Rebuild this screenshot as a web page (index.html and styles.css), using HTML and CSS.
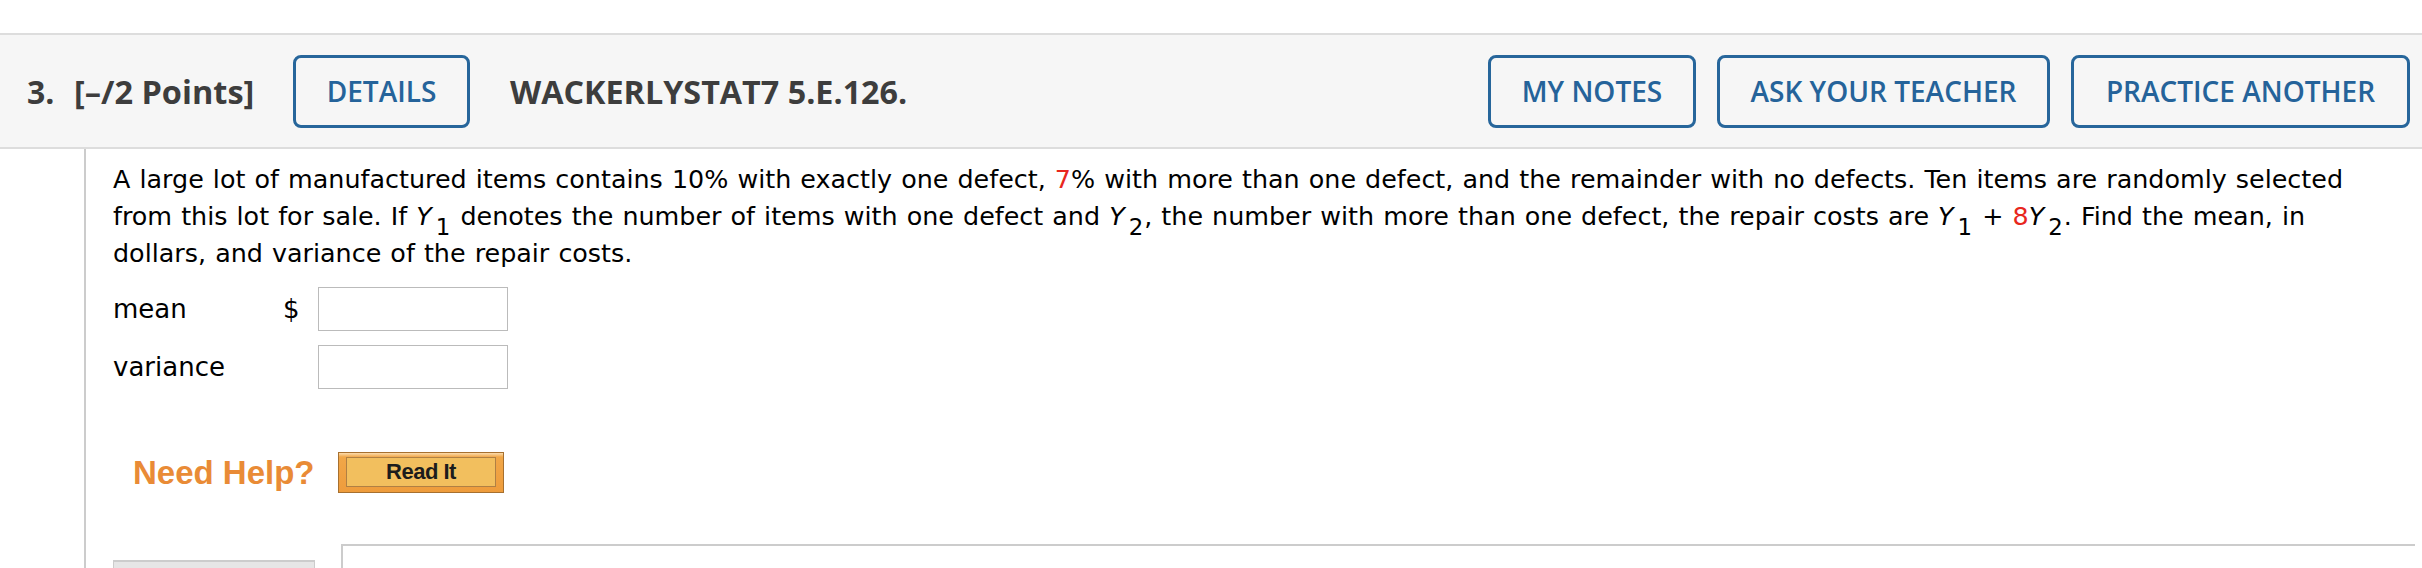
FILE: index.html
```html
<!DOCTYPE html>
<html>
<head>
<meta charset="utf-8">
<link rel="stylesheet" href="styles.css">
</head>
<body>
<div class="page">
  <div class="qheader">
    <span class="qnum">3.</span>
    <span class="qpoints">[–/2 Points]</span>
    <button class="hbtn details">DETAILS</button>
    <span class="qtitle">WACKERLYSTAT7 5.E.126.</span>
    <div class="hright">
      <button class="hbtn notes">MY NOTES</button>
      <button class="hbtn ask">ASK YOUR TEACHER</button>
      <button class="hbtn practice">PRACTICE ANOTHER</button>
    </div>
  </div>
  <div class="qbody">
    <p class="qtext">A large lot of manufactured items contains 10% with exactly one defect, <span class="red">7</span>% with more than one defect, and the remainder with no defects. Ten items are randomly selected from this lot for sale. If <i>Y</i><sub>1</sub> denotes the number of items with one defect and <i>Y</i><sub>2</sub>, the number with more than one defect, the repair costs are <i>Y</i><sub>1</sub> + <span class="red">8</span><i>Y</i><sub>2</sub>. Find the mean, in dollars, and variance of the repair costs.</p>
    <div class="answers">
      <span class="alabel">mean</span>
      <span class="aunit">$</span>
      <input class="abox" type="text">
      <span class="alabel">variance</span>
      <span class="aunit"></span>
      <input class="abox" type="text">
    </div>
    <div class="help">
      <span class="needhelp">Need Help?</span>
      <span class="readit"><span class="readit-inner">Read It</span></span>
    </div>
    <div class="bottom">
      <div class="graybox"></div>
      <div class="bigbox"></div>
    </div>
  </div>
</div>
</body>
</html>
```

FILE: styles.css
```css
html, body {
  margin: 0;
  padding: 0;
  background: #ffffff;
}
.page {
  padding-top: 33px;
  height: 535px;
  overflow: hidden;
}
.qheader {
  display: flex;
  align-items: center;
  height: 112px;
  background: #f6f6f6;
  border-top: 2px solid #dddddd;
  border-bottom: 2px solid #dddddd;
  padding: 0 12px 0 27px;
  font-family: "Open Sans", sans-serif;
  color: #3d3d3d;
}
.qnum {
  font-weight: 700;
  font-size: 32px;
  width: 47px;
}
.qpoints {
  font-weight: 700;
  font-size: 32.5px;
  width: 219px;
  white-space: nowrap;
}
.hbtn {
  font-family: "Open Sans", sans-serif;
  font-weight: 600;
  font-size: 28px;
  color: #25639a;
  background: #f6f6f6;
  border: 3px solid #27669b;
  border-radius: 8px;
  height: 73px;
  padding: 0;
  margin: 0;
}
.details {
  width: 177px;
}
.qtitle {
  font-weight: 700;
  font-size: 32.3px;
  margin-left: 40px;
  white-space: nowrap;
}
.hright {
  margin-left: auto;
  display: flex;
  gap: 21px;
}
.notes { width: 208px; }
.ask { width: 333px; }
.practice { width: 339px; }
.qbody {
  margin-left: 84px;
  border-left: 2px solid #cccccc;
  padding-left: 27px;
  padding-top: 12px;
  height: 420px;
  font-family: "DejaVu Sans", Verdana, sans-serif;
  color: #000000;
}
.qtext {
  margin: 0;
  font-size: 25.4px;
  word-spacing: 1px;
  line-height: 37px;
  max-width: 2262px;
}
.qtext i {
  font-style: italic;
}
.qtext sub {
  font-size: 0.9em;
  vertical-align: -0.42em;
  line-height: 0;
  margin-left: 4px;
  margin-right: 1px;
}
.red {
  color: #e8271d;
}
.answers {
  display: grid;
  grid-template-columns: 170px 35px 190px;
  grid-auto-rows: 44px;
  row-gap: 14px;
  align-items: center;
  margin-top: 15px;
  font-size: 26px;
}
.abox {
  box-sizing: border-box;
  width: 190px;
  height: 44px;
  border: 1px solid #bbbbbb;
  margin: 0;
  padding: 0;
  background: #ffffff;
}
.help {
  display: flex;
  align-items: center;
  margin-top: 63px;
  padding-left: 20px;
}
.needhelp {
  font-family: "Liberation Sans", Arial, sans-serif;
  font-weight: 700;
  font-size: 33px;
  color: #e98b36;
  width: 205px;
}
.readit {
  box-sizing: border-box;
  width: 166px;
  height: 41px;
  border: 1px solid #a7702f;
  background: linear-gradient(#fbdcae 0, #f1a748 4px, #ee9c3c 100%);
  padding: 4px 7px 5px 7px;
  display: flex;
}
.readit-inner {
  flex: 1;
  border: 1px solid #b08044;
  background: #f2bf5e;
  font-family: "Liberation Sans", Arial, sans-serif;
  font-weight: 700;
  font-size: 22px;
  color: #1c1c1c;
  display: flex;
  align-items: center;
  justify-content: center;
  letter-spacing: -0.5px;
}
.bottom {
  display: flex;
  align-items: flex-start;
  margin-top: 51px;
  gap: 26px;
}
.graybox {
  margin-top: 16px;
  width: 200px;
  height: 40px;
  background: #e6e6e6;
  border-top: 2px solid #cccccc;
  border-left: 1px solid #cccccc;
  border-right: 1px solid #cccccc;
}
.bigbox {
  flex: 1;
  height: 60px;
  border-top: 2px solid #cccccc;
  border-left: 2px solid #cccccc;
  margin-right: 7px;
}
```
